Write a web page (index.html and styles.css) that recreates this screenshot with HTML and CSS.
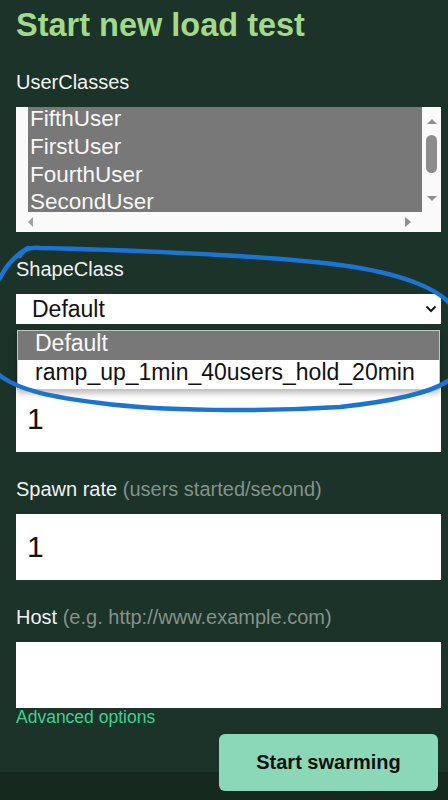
FILE: index.html
```html
<!DOCTYPE html>
<html lang="en">
<head>
    <meta charset="UTF-8">
    <meta name="viewport" content="width=device-width, initial-scale=1.0">
    <title>Locust</title>
    <link rel="stylesheet" href="styles.css">
</head>
<body>
    <main class="panel">
        <h1 class="title">Start new load test</h1>
        <form class="swarm-form">
            <div class="field">
                <label class="field-label">UserClasses</label>
                <div class="listbox">
                    <div class="listbox-view">
                        <div class="listbox-items">
                            <ul class="listbox-list">
                                <li>FifthUser</li>
                                <li>FirstUser</li>
                                <li>FourthUser</li>
                                <li>SecondUser</li>
                            </ul>
                        </div>
                        <div class="scroll-y">
                            <span class="arrow arrow-up"></span>
                            <span class="thumb-y"></span>
                            <span class="arrow arrow-down"></span>
                        </div>
                    </div>
                    <div class="scroll-x">
                        <span class="arrow arrow-left"></span>
                        <span class="arrow arrow-right"></span>
                    </div>
                </div>
            </div>

            <div class="field">
                <label class="field-label">ShapeClass</label>
                <div class="select-wrap">
                    <div class="select-box">
                        <span>Default</span>
                        <svg class="chevron" width="12" height="8" viewBox="0 0 12 8">
                            <polyline points="1.5,1.5 6,6 10.5,1.5" fill="none" stroke="#1a1a1a" stroke-width="2"/>
                        </svg>
                    </div>
                    <ul class="select-popup">
                        <li class="option is-active">Default</li>
                        <li class="option">ramp_up_1min_40users_hold_20min</li>
                    </ul>
                </div>
            </div>

            <div class="field">
                <label class="field-label">Number of users <span class="hint">(peak concurrency)</span></label>
                <input class="text-input" type="text" value="1">
            </div>

            <div class="field">
                <label class="field-label">Spawn rate <span class="hint">(users started/second)</span></label>
                <input class="text-input" type="text" value="1">
            </div>

            <div class="field">
                <label class="field-label">Host <span class="hint">(e.g. http://www.example.com)</span></label>
                <input class="text-input" type="text" value="">
            </div>

            <a class="advanced-link" href="#">Advanced options</a>

            <div class="actions">
                <button class="start-button" type="button">Start swarming</button>
            </div>
        </form>
    </main>

    <!-- hand-drawn marker ring around the shape selector -->
    <svg class="marker" width="448" height="800" viewBox="0 0 448 800">
        <path d="M 20 256 C 23 250, 28 247, 40 248
                 C 120 250, 260 255, 340 265
                 C 400 273, 438 288, 452 306
                 C 470 330, 468 368, 448 381
                 C 430 393, 395 401, 340 407
                 C 260 412, 160 411, 100 403
                 C 50 397, 20 390, 2 377
                 C -22 360, -22 300, 0 278
                 C 6 266, 14 256, 28 248"
              fill="none" stroke="#1a74d3" stroke-width="4.5" stroke-linecap="round" stroke-linejoin="round"/>
    </svg>
</body>
</html>
```

FILE: styles.css
```css
* {
    box-sizing: border-box;
}
body {
    margin: 0;
    position: relative;
    background-color: #16291f;
    font-family: "Liberation Sans", Arial, sans-serif;
}
/* form area is lighter, the strip at the very bottom is the page footer tone */
.panel {
    min-height: 100vh;
    padding: 6px 7px 0 16px;
    background: linear-gradient(to bottom, #1b3328 772px, #16291f 772px);
}
.title {
    margin: 0;
    font-size: 32.5px;
    line-height: 38px;
    font-weight: bold;
    color: #a2d98b;
}
.swarm-form {
    margin: 0;
}
.field {
    margin-top: 26px;
}
.field:first-child {
    margin-top: 27px;
}
.field-label {
    display: block;
    margin-bottom: 13px;
    font-size: 20px;
    line-height: 23px;
    color: #f2f2f2;
}
.hint {
    color: #86928b;
}

/* multi select list */
.listbox {
    height: 125px;
    background-color: #fafafa;
}
.listbox-view {
    display: flex;
    height: 105px;
    padding-left: 12px;
}
.listbox-items {
    flex: 1;
    overflow: hidden;
    background-color: #787878;
}
.listbox-list {
    list-style: none;
    margin: -2px 0 0;
    padding: 0 0 0 2px;
    font-size: 22.5px;
    line-height: 27.75px;
    color: #f7f7f7;
}
.scroll-y {
    width: 19px;
    display: flex;
    flex-direction: column;
    align-items: center;
    padding: 12px 0 11px;
}
.thumb-y {
    width: 11px;
    height: 38px;
    margin-top: 11px;
    border-radius: 6px;
    background-color: #8c8c8c;
}
.scroll-x {
    height: 20px;
    display: flex;
    align-items: center;
    justify-content: space-between;
    padding: 0 30px 0 12px;
}
.arrow {
    width: 0;
    height: 0;
    border-style: solid;
    border-color: transparent;
}
.arrow-up {
    border-width: 0 5px 5px;
    border-bottom-color: #8f8f8f;
}
.arrow-down {
    margin-top: auto;
    border-width: 5px 5px 0;
    border-top-color: #8f8f8f;
}
.arrow-left {
    border-width: 5px 5px 5px 0;
    border-right-color: #a0a0a0;
}
.arrow-right {
    border-width: 5px 0 5px 6px;
    border-left-color: #8f8f8f;
}

/* dropdown */
.select-wrap {
    position: relative;
}
.select-box {
    height: 30px;
    display: flex;
    align-items: center;
    padding: 0 4px 0 16px;
    background-color: #fff;
    font-size: 23px;
    color: #111;
}
.chevron {
    margin-left: auto;
}
.select-popup {
    position: absolute;
    top: 36px;
    left: 1px;
    right: 1px;
    z-index: 2;
    margin: 0;
    padding: 0;
    list-style: none;
    border: 1px solid #c4c4c4;
    background-color: #fff;
    box-shadow: 0 3px 6px rgba(0, 0, 0, 0.28);
}
.option {
    height: 29px;
    padding-left: 17px;
    font-size: 23px;
    line-height: 25px;
    color: #111;
    white-space: nowrap;
}
.option.is-active {
    background-color: #787878;
    color: #fafafa;
}

.text-input {
    display: block;
    width: 100%;
    height: 66px;
    margin: 0;
    padding: 0 11px;
    border: 0;
    outline: none;
    background-color: #fff;
    font-family: "Liberation Sans", Arial, sans-serif;
    font-size: 30px;
    color: #111;
}

.advanced-link {
    display: block;
    width: fit-content;
    font-size: 17.5px;
    line-height: 19.5px;
    color: #3fd192;
    text-decoration: none;
}
.actions {
    display: flex;
    justify-content: flex-end;
    margin-top: 6px;
    padding-right: 3px;
}
.start-button {
    width: 219px;
    height: 57px;
    border: 0;
    border-radius: 6px;
    background-color: #8bd8b9;
    font-family: "Liberation Sans", Arial, sans-serif;
    font-size: 20px;
    font-weight: bold;
    color: #111;
}

.marker {
    position: absolute;
    top: 0;
    left: 0;
    z-index: 5;
    pointer-events: none;
}
```
